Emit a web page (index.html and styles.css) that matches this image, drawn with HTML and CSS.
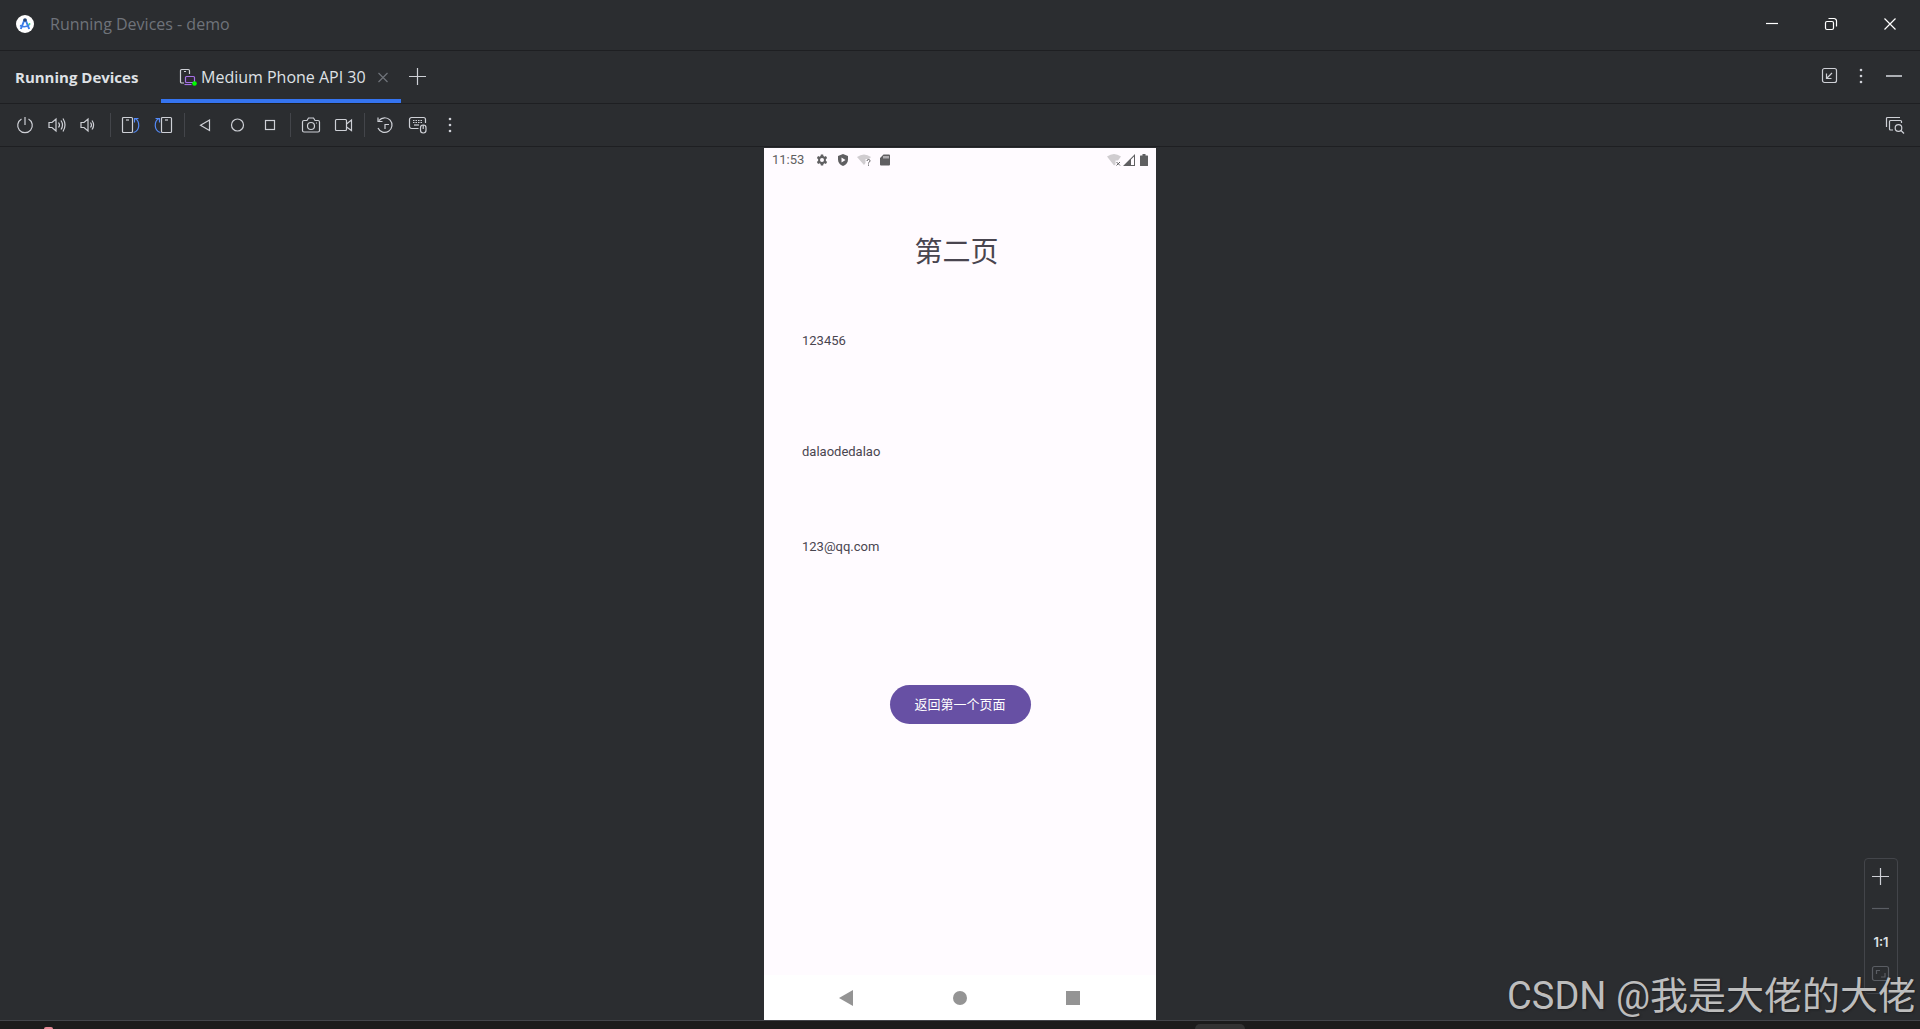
FILE: index.html
```html
<!DOCTYPE html>
<html lang="zh-CN">
<head>
    <meta charset="UTF-8">
    <meta name="viewport" content="width=device-width, initial-scale=1.0">
    <title>Running Devices - demo</title>
    <link rel="stylesheet" href="styles.css">
</head>
<body>
    <header class="titlebar">
        <svg class="logo" viewBox="0 0 20 20">
            <circle cx="10" cy="10" r="9" fill="#fff"/>
            <path d="M9.6 5.5 5.8 15M10.4 5.5 14.2 15" fill="none" stroke="#3b7de8" stroke-width="2"/>
            <path d="M5 11.5q5 3 9.5-1" fill="none" stroke="#3b7de8" stroke-width="1.6"/>
            <circle cx="10" cy="6" r="1.8" fill="#27446e"/>
            <circle cx="14.5" cy="10" r="1" fill="#3ddc84"/>
        </svg>
        <span class="window-title">Running Devices - demo</span>
        <div class="window-buttons">
            <button type="button" aria-label="Minimize"><svg viewBox="0 0 20 20"><path d="M4 9.5h12"/></svg></button>
            <button type="button" aria-label="Restore"><svg viewBox="0 0 20 20"><rect x="4.5" y="7.5" width="8" height="8" rx="1.5"/><path d="M7.5 4.5H13A2.5 2.5 0 0 1 15.5 7v5.5"/></svg></button>
            <button type="button" aria-label="Close"><svg viewBox="0 0 20 20"><path d="M4.5 4.5l11 11M15.5 4.5l-11 11"/></svg></button>
        </div>
    </header>

    <nav class="tabbar">
        <strong class="tool-name">Running Devices</strong>
        <div class="tab">
            <svg class="tab-icon" viewBox="0 0 18 18">
                <path d="M5 15H2.7a1.2 1.2 0 0 1-1.2-1.2V2.7A1.2 1.2 0 0 1 2.7 1.5h6.6a1.2 1.2 0 0 1 1.2 1.2V6M5 3.5h2" fill="none" stroke="#ced0d6"/>
                <rect x="6.5" y="8.5" width="9" height="6" rx="1" fill="#2f2936" stroke="#a571e6"/>
                <path d="M5.5 16.5h7" stroke="#a571e6"/>
                <circle cx="15.5" cy="15.5" r="2.3" fill="#0f0" stroke="none"/>
            </svg>
            <a href="#device">Medium Phone API 30</a>
            <button type="button" class="tab-close" aria-label="Close tab"><svg viewBox="0 0 20 20"><path d="M5.5 6l9 9M14.5 6l-9 9"/></svg></button>
        </div>
        <button type="button" class="tab-add" aria-label="Add device"><svg viewBox="0 0 20 20"><path d="M10.5 1v17M2 9.5h17"/></svg></button>
        <div class="tab-actions">
            <button type="button" aria-label="Dock"><svg viewBox="0 0 20 20"><rect x="2.5" y="1.5" width="14" height="14" rx="2"/><path d="M12 6l-5 5M6.5 6.5v5h5"/></svg></button>
            <button type="button" aria-label="Options"><svg class="dots" viewBox="0 0 20 20"><circle cx="9" cy="3" r="1.3"/><circle cx="9" cy="9" r="1.3"/><circle cx="9" cy="15" r="1.3"/></svg></button>
            <button type="button" aria-label="Hide"><svg viewBox="0 0 20 20"><path d="M2 9h16" stroke-width="1.6"/></svg></button>
        </div>
    </nav>

    <div class="toolbar">
        <button type="button" aria-label="Power"><svg viewBox="0 0 20 20"><path d="M10 2v8M6.5 4a7.3 7.3 0 1 0 7 0"/></svg></button>
        <button type="button" aria-label="Volume up"><svg viewBox="0 0 20 20"><path d="M2 7.5h3l4-3.5v12l-4-3.5H2zM11.5 7.5q2 2.5 0 5M14 5.5q3 4.5 0 9M16 3.5q4 6.5 0 13"/></svg></button>
        <button type="button" aria-label="Volume down"><svg viewBox="0 0 20 20"><path d="M2 7.5h3l4-3.5v12l-4-3.5H2zM11.5 7.5q2 2.5 0 5M13 5.5q3.2 4.5 0 9"/></svg></button>
        <span class="separator"></span>
        <button type="button" aria-label="Rotate left"><svg viewBox="0 0 20 20"><rect x="1.5" y="2.5" width="10" height="15" rx="1"/><path d="M5 5h3"/><path class="blue" d="M12.5 17.5c7-2 6.5-11.5 1.5-14M17.5 3.5h-4v4"/></svg></button>
        <button type="button" aria-label="Rotate right"><svg viewBox="0 0 20 20"><rect x="8.5" y="2.5" width="10" height="15" rx="1"/><path d="M12 5h3"/><path class="blue" d="M7.5 17.5c-7-2-6.5-11.5-1.5-14M2.5 3.5h4v4"/></svg></button>
        <span class="separator"></span>
        <button type="button" aria-label="Back"><svg viewBox="0 0 20 20"><path d="M14.5 5v10.5L5.5 10.2z"/></svg></button>
        <button type="button" aria-label="Home"><svg viewBox="0 0 20 20"><circle cx="10.5" cy="10" r="6"/></svg></button>
        <button type="button" aria-label="Overview"><svg viewBox="0 0 20 20"><rect x="6.5" y="5.5" width="9" height="9"/></svg></button>
        <span class="separator"></span>
        <button type="button" aria-label="Screenshot"><svg viewBox="0 0 20 20"><path d="M3 5.5h3L7.5 3h5L14 5.5h3A1.5 1.5 0 0 1 18.5 7v8.5A1.5 1.5 0 0 1 17 17H3a1.5 1.5 0 0 1-1.5-1.5V7A1.5 1.5 0 0 1 3 5.5z"/><circle cx="10" cy="11" r="3.5"/><path d="M15 8h1"/></svg></button>
        <button type="button" aria-label="Record"><svg viewBox="0 0 20 20"><rect x="2.5" y="4.5" width="11" height="11" rx="1"/><path d="M13.5 9l5-4v10.5l-5-3.5"/></svg></button>
        <span class="separator"></span>
        <button type="button" aria-label="Snapshots"><svg viewBox="0 0 20 20"><path d="M4 5.5a7.3 7.3 0 1 1-1 7.5M3 2.5v4h4.5M10 14V9.5h4"/></svg></button>
        <button type="button" aria-label="Hardware input"><svg viewBox="0 0 20 20"><path d="M11.5 13.5h-7a2 2 0 0 1-2-2v-7a2 2 0 0 1 2-2h12a2 2 0 0 1 2 2V8"/><path d="M6 5.5h10M6 7.5h9" stroke-dasharray="1.5 1"/><path d="M7 10h5"/><rect x="13.5" y="10" width="5.5" height="8" rx="2.7"/><path d="M16.2 10v4"/></svg></button>
        <button type="button" aria-label="More"><svg class="dots" viewBox="0 0 20 20"><circle cx="11" cy="4" r="1.3"/><circle cx="11" cy="10" r="1.3"/><circle cx="11" cy="16" r="1.3"/></svg></button>
        <button type="button" class="inspect" aria-label="Inspect"><svg viewBox="0 0 20 20"><path d="M1.5 12V3.5a1 1 0 0 1 1-1H15M8 15H5.500a1 1 0 0 1-1-1V6.500a1 1 0 0 1 1-1h10a1 1 0 0 1 1 1v1.500"/><circle cx="13.5" cy="13" r="3.3"/><path d="M16 15.5l3 3"/></svg></button>
    </div>

    <main class="workspace" id="device">
        <section class="phone">
            <div class="status">
                <span class="clock">11:53</span>
                <svg viewBox="0 0 24 24"><path fill-rule="evenodd" d="M9.7 1h4.6l.6 3.2 2 1.100 3-1.100 2.300 4-2.500 2.100v3.400l2.500 2.100-2.300 4-3-1.100-2 1.100-.6 3.300H9.700l-.6-3.300-2-1.100-3 1.100-2.300-4 2.500-2.100v-3.400L1.800 8.200l2.300-4 3 1.100 2-1.100zM12 8a4 4 0 1 0 0 8 4 4 0 0 0 0-8z"/></svg>
                <svg viewBox="0 0 24 24"><path fill-rule="evenodd" d="M12 0 2 4v7c0 6 4 11 10 13 6-2 10-7 10-13V4zM9 7l8 5-8 5z"/></svg>
                <svg viewBox="0 0 24 24"><path class="faint" d="M-2 6q14-10 28 0l-4 4h-7v8l-3 4z"/><path class="mark" d="M18 14q0-3 3-3t3 2.5-3 4V19M21 21v2.500"/></svg>
                <svg viewBox="0 0 24 24"><path fill-rule="evenodd" d="M9 1h11a2 2 0 0 1 2 2v18a2 2 0 0 1-2 2H4a2 2 0 0 1-2-2V8zM9 4v5h2V4zM13 4v5h2V4zM17 4v5h2V4z"/></svg>
                <div class="signals">
                    <svg viewBox="0 0 24 24"><path class="faint" d="M-2 5q14-10 28 0l-6 8h-5v8l-3 2z"/><path class="mark" d="M17 16l7 7M24 16l-7 7"/></svg>
                    <svg viewBox="0 0 24 24"><path fill-rule="evenodd" d="M24 0v24H0zM22 5l-6 6v11h6z"/></svg>
                    <svg viewBox="0 0 24 24"><path d="M9 0h6v3h4a1 1 0 0 1 1 1v19a1 1 0 0 1-1 1H5a1 1 0 0 1-1-1V4a1 1 0 0 1 1-1h4z"/></svg>
                </div>
            </div>
            <div class="screen">
                <h1>第二页&nbsp;</h1>
                <p class="account">123456</p>
                <p class="nickname">dalaodedalao</p>
                <p class="email">123@qq.com</p>
                <button type="button" class="return-btn">返回第一个页面</button>
            </div>
            <div class="phone-nav">
                <button type="button" aria-label="Back"><svg viewBox="0 0 16 16"><path d="M14 0v16L0 8z"/></svg></button>
                <button type="button" aria-label="Home"><svg viewBox="0 0 16 16"><circle cx="8" cy="8" r="7"/></svg></button>
                <button type="button" aria-label="Recents"><svg viewBox="0 0 16 16"><path d="M1 1h14v14H1z"/></svg></button>
            </div>
        </section>
        <div class="zoom">
            <button type="button" aria-label="Zoom in"><svg viewBox="0 0 20 20"><path d="M9.5 2v17M1 10.5h17"/></svg></button>
            <button type="button" aria-label="Zoom out" disabled><svg viewBox="0 0 20 20"><path d="M1 9.5h17"/></svg></button>
            <button type="button">1:1</button>
            <button type="button" aria-label="Zoom to fit" disabled><svg viewBox="0 0 20 20"><rect x="1.5" y="1.5" width="16" height="14" rx="2"/><path d="M5.5 9V5.5H9M10 12h4V8"/></svg></button>
        </div>
        <div class="watermark">CSDN @我是大佬的大佬</div>
    </main>
    <footer class="taskbar">
        <span class="task-dot"></span>
        <span class="task-item"></span>
    </footer>
</body>
</html>
```
FILE: styles.css
```css
* {
    box-sizing: border-box;
}
body {
    display: flex;
    flex-direction: column;
    min-height: 100vh;
    margin: 0;
    background-color: #2b2d30;
    color: #dfe1e5;
    font-family: "Open Sans", "Noto Sans CJK SC", sans-serif;
    font-size: 16px;
}
button {
    display: flex;
    align-items: center;
    justify-content: center;
    padding: 0;
    border: none;
    background: none;
    color: inherit;
    font: inherit;
    cursor: pointer;
}
svg {
    display: block;
    width: 20px;
    height: 20px;
    overflow: visible;
    fill: none;
    stroke: #ced0d6;
    stroke-width: 1.2;
}
.dots {
    fill: #ced0d6;
    stroke: none;
}
.blue {
    stroke: #548af7;
}

/* 标题栏 */
.titlebar {
    display: flex;
    align-items: center;
    height: 51px;
    padding: 0 1px 2px 15px;
    border-bottom: 1px solid #1e1f22;
}
.logo {
    stroke: none;
}
.window-title {
    margin-left: 15px;
    color: #6f737a;
}
.window-buttons {
    display: flex;
    margin-left: auto;
}
.window-buttons button {
    width: 59px;
    height: 48px;
}
.window-buttons svg {
    stroke: #fff;
}

/* 标签栏 */
.tabbar {
    display: flex;
    align-items: center;
    height: 53px;
    padding: 0 10px 0 15px;
    border-bottom: 1px solid #1e1f22;
}
.tool-name {
    width: 146px;
    font-size: 15px;
}
.tab {
    display: flex;
    align-items: center;
    align-self: stretch;
    width: 240px;
    padding-left: 18px;
    background: linear-gradient(#3574f0, #3574f0) bottom / 100% 4px no-repeat;
}
.tab-icon {
    width: 18px;
    height: 18px;
    margin-right: 4px;
}
.tab a {
    color: inherit;
    text-decoration: none;
}
.tab-close {
    margin-left: auto;
    margin-right: 8px;
}
.tab-close svg {
    stroke: #6f737a;
}
.tab-add {
    margin-left: 6px;
}
.tab-actions {
    display: flex;
    margin-left: auto;
}
.tab-actions button {
    width: 32px;
}

/* 设备工具栏 */
.toolbar {
    display: flex;
    align-items: center;
    height: 43px;
    padding: 0 9px;
    border-bottom: 1px solid #1e1f22;
}
.toolbar button {
    width: 32px;
    height: 32px;
}
.separator {
    width: 1px;
    height: 24px;
    margin: 0 4px 0 5px;
    background-color: #43454a;
}
.toolbar .inspect {
    margin-left: auto;
}

/* 设备画面 */
.workspace {
    position: relative;
    display: flex;
    flex: 1;
    justify-content: center;
    padding-top: 1px;
    border-bottom: 1px solid #43454a;
}
.phone {
    display: flex;
    flex-direction: column;
    width: 392px;
    background-color: #fffbff;
    color: #49454f;
    font-family: Roboto, "Noto Sans CJK SC", sans-serif;
    font-size: 13px;
    line-height: 16px;
}
.status {
    display: flex;
    align-items: center;
    gap: 9px;
    height: 24px;
    padding: 0 6px 0 8px;
    color: #5f5f61;
}
.clock {
    margin-right: 3px;
}
.status svg {
    width: 12px;
    height: 12px;
    fill: #5f5f61;
    stroke: none;
}
.status .faint {
    fill: #d0cdd0;
}
.status .mark {
    fill: none;
    stroke: #5f5f61;
    stroke-width: 2;
}
.signals {
    display: flex;
    gap: 3px;
    margin-left: auto;
}
.screen {
    flex: 1;
    padding: 0 38px;
}
.screen h1 {
    margin: 61px 0 60px;
    font-size: 28px;
    font-weight: 400;
    line-height: 40px;
    text-align: center;
}
.screen p {
    margin: 0;
}
.screen .nickname {
    margin: 95px 0 79px;
}
.return-btn {
    width: 141px;
    height: 39px;
    margin: 130px auto 0;
    border-radius: 20px;
    background-color: #6750a4;
    color: #fff;
}
.phone-nav {
    display: flex;
    justify-content: center;
    gap: 97px;
    height: 45px;
    background-color: #fff;
}
.phone-nav svg {
    width: 16px;
    height: 16px;
    fill: #949494;
    stroke: none;
}

/* 缩放按钮 */
.zoom {
    position: absolute;
    right: 22px;
    bottom: 26px;
    display: grid;
    grid-auto-rows: 33px;
    width: 34px;
    height: 136px;
    border: 1px solid #43454a;
    border-radius: 4px;
}
.zoom button {
    font-family: Inter, sans-serif;
    font-size: 13px;
    font-weight: 600;
}
.zoom button:disabled svg {
    stroke: #5a5d63;
}
.watermark {
    position: absolute;
    right: 4px;
    bottom: 0;
    color: #bdbdbd;
    font-family: Roboto, "Noto Sans CJK SC", sans-serif;
    font-size: 38px;
    line-height: 48px;
    text-shadow: 1px 1px 2px #1e1f22;
}

/* 底部任务栏 */
.taskbar {
    display: flex;
    align-items: flex-end;
    height: 8px;
    background-color: #1c1c1c;
}
.task-dot {
    width: 9px;
    height: 2px;
    margin-left: 44px;
    border-radius: 4px 4px 0 0;
    background-color: #e88a96;
}
.task-item {
    width: 50px;
    height: 5px;
    margin-left: 1142px;
    border-radius: 5px 5px 0 0;
    background-color: #333;
}
```
